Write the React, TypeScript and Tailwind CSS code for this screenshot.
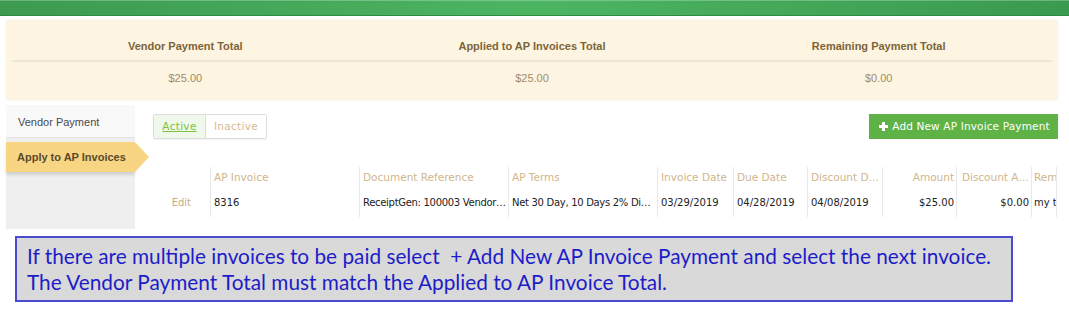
import React from "react"

const totals = [
  { label: "Vendor Payment Total", value: "$25.00" },
  { label: "Applied to AP Invoices Total", value: "$25.00" },
  { label: "Remaining Payment Total", value: "$0.00" },
]

// column widths taken from the divider positions in the grid
const columns = [
  { head: "", cell: "Edit", w: "w-[75px]", edge: "", align: "text-right pr-[19px]", cellColor: "text-[#c8ad85]" },
  { head: "AP Invoice", cell: "8316", w: "w-[149px]", edge: "border-l", align: "pl-[3px]" },
  { head: "Document Reference", cell: "ReceiptGen: 100003 Vendor…", w: "w-[149px]", edge: "border-l", align: "pl-[3px]", tight: true },
  { head: "AP Terms", cell: "Net 30 Day, 10 Days 2% Di…", w: "w-[149px]", edge: "border-l", align: "pl-[3px]", tight: true },
  { head: "Invoice Date", cell: "03/29/2019", w: "w-[76px]", edge: "border-l", align: "pl-[3px]" },
  { head: "Due Date", cell: "04/28/2019", w: "w-[74px]", edge: "border-l", align: "pl-[3px]" },
  { head: "Discount D…", cell: "04/08/2019", w: "w-[75px]", edge: "border-l", align: "pl-[3px]" },
  { head: "Amount", cell: "$25.00", w: "w-[74px]", edge: "border-l", align: "text-right pr-[2px]" },
  { head: "Discount A…", cell: "$0.00", w: "w-[75px]", edge: "border-l", align: "text-right pr-[2px]" },
  { head: "Rem", cell: "my t", w: "w-[26px]", edge: "border-l border-r", align: "pl-[2px]" },
]

function PlusIcon() {
  return (
    <svg width="9" height="9" viewBox="0 0 9 9" className="shrink-0">
      <rect x="3" y="0" width="3" height="9" fill="white" />
      <rect x="0" y="3" width="9" height="3" fill="white" />
    </svg>
  )
}

function Sidebar() {
  return (
    <div className="relative w-[129px] h-[124px] bg-[#efefef] font-['Liberation_Sans',Arial,sans-serif] shrink-0">
      <div className="h-[33px] bg-[#f9f9f9] border-b border-[#e2e2e2] flex items-center pl-[12px] pt-[2px] text-[11px] text-[#4a4a4a]">
        Vendor Payment
      </div>
      <div className="relative mt-[4px] h-[30px] bg-[#f8d583] flex items-center pl-[11px] text-[11px] font-bold text-[#5a4a2c] shadow-[0_3px_3px_rgba(0,0,0,0.12)]">
        Apply to AP Invoices
        <div className="absolute right-[-14px] top-0 w-0 h-0 border-y-[15px] border-y-transparent border-l-[14px] border-l-[#f8d583]" />
      </div>
    </div>
  )
}

function InvoiceGrid() {
  return (
    <div className="mt-[28px] font-['DejaVu_Sans',Verdana,sans-serif]">
      <div className="flex h-[23px]">
        {columns.map((c, i) => (
          <div
            key={i}
            className={`${c.w} ${c.edge} ${c.align} border-[#e8e8e8] shrink-0 overflow-hidden whitespace-nowrap text-[10.5px] leading-[20px] text-[#d0b68c]`}
          >
            {c.head}
          </div>
        ))}
      </div>
      <div className="flex h-[27px]">
        {columns.map((c, i) => (
          <div
            key={i}
            className={`${c.w} ${c.edge} ${c.align} ${c.tight ? "tracking-[-0.3px]" : ""} border-[#e8e8e8] shrink-0 overflow-hidden whitespace-nowrap text-[10px] leading-[26px] ${c.cellColor ?? "text-[#222222]"}`}
          >
            {c.cell}
          </div>
        ))}
      </div>
    </div>
  )
}

export default function App() {
  return (
    <div className="w-[1069px] h-[321px] bg-white overflow-hidden">
      <div className="h-[16px] bg-gradient-to-r from-[#3c9a51] via-[#4cb562] to-[#3a9a4f] border-b border-[#2f8a44] shadow-[inset_0_1px_0_rgba(255,255,255,0.25)]" />

      <div className="ml-[6px] mt-[4px] w-[1052px] h-[80px] bg-[#fdf5e2] shadow-[0_0_2px_rgba(0,0,0,0.08)] px-[6px] font-['Liberation_Sans',Arial,sans-serif]">
        <div className="flex h-[42px] items-end pb-[6px] border-b-2 border-[#ece6d6]">
          {totals.map((t) => (
            <div key={t.label} className="flex-1 text-center text-[11px] font-bold text-[#7d6438]">
              {t.label}
            </div>
          ))}
        </div>
        <div className="flex pt-[8px]">
          {totals.map((t) => (
            <div key={t.label} className="flex-1 text-center text-[11px] text-[#a08c68]">
              {t.value}
            </div>
          ))}
        </div>
      </div>

      <div className="flex ml-[6px] mt-[5px]">
        <Sidebar />
        <div className="flex-1">
          <div className="flex items-start justify-between pt-[9px] pl-[18px] pr-[11px]">
            <div className="flex h-[25px] border border-[#dcdcdc] rounded-[2px] font-['DejaVu_Sans',Verdana,sans-serif] text-[10.5px] tracking-[0.3px] shadow-[0_1px_1px_rgba(0,0,0,0.05)]">
              <div className="w-[52px] flex items-center justify-center bg-[#eff8ea] text-[#7cc242] underline border-r border-[#dcdcdc]">
                Active
              </div>
              <div className="w-[60px] flex items-center justify-center bg-white text-[#d6bc92]">
                Inactive
              </div>
            </div>
            <button className="w-[189px] h-[25px] bg-[#5fb246] flex items-center justify-center gap-[4px] pl-[2px] text-white text-[10.5px] tracking-[0.15px] font-['DejaVu_Sans',Verdana,sans-serif]">
              <PlusIcon />
              <span>Add New AP Invoice Payment</span>
            </button>
          </div>
          <InvoiceGrid />
        </div>
      </div>

      <div className="ml-[15px] mt-[7px] w-[998px] h-[66px] bg-[#d9d9d9] border-2 border-[#4b4bd0] pl-[10px] pt-[5px] font-['Lato',sans-serif] text-[20.8px] leading-[26px] text-[#1d1dc8] whitespace-pre">
        {"If there are multiple invoices to be paid select  + Add New AP Invoice Payment and select the next invoice.\nThe Vendor Payment Total must match the Applied to AP Invoice Total."}
      </div>
    </div>
  )
}
